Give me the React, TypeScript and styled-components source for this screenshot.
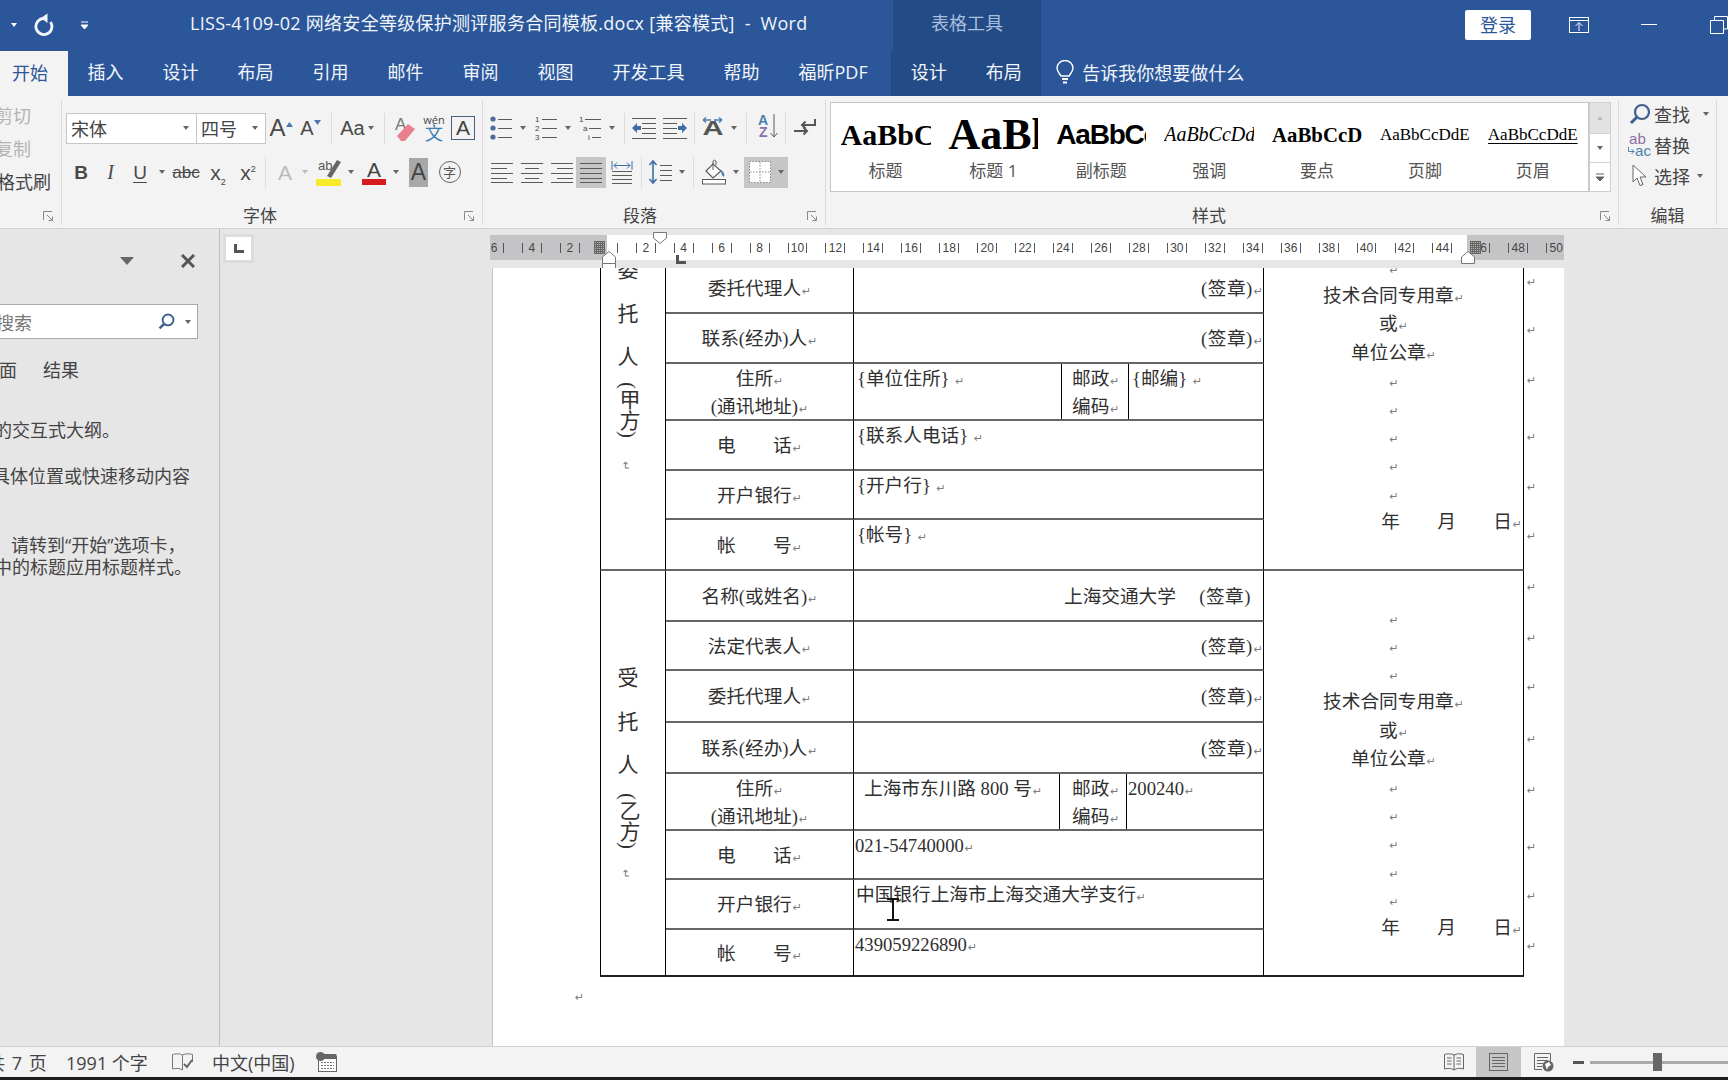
import React from "react";
import styled, { createGlobalStyle } from "styled-components";

const UI = `"Open Sans", "Noto Sans CJK SC", sans-serif`;
const DOC = `"Liberation Serif", "Noto Sans CJK SC", serif`;

const GlobalStyle = createGlobalStyle`
  html, body { margin: 0; padding: 0; background: #000; }
  * { box-sizing: border-box; }
`;

const Window = styled.div`
  width: 1728px;
  height: 1080px;
  display: flex;
  flex-direction: column;
  overflow: hidden;
  font-family: ${UI};
  background: #f3f3f3;
  border-bottom: 3px solid #1c1c1c;
`;

/* ---------- title bar ---------- */
const TitleBar = styled.div`
  height: 50px;
  flex: none;
  display: flex;
  align-items: center;
  background: #2b579a;
  color: #fff;
`;
const Quick = styled.div`
  width: 190px;
  flex: none;
  display: flex;
  align-items: center;
  padding-left: 11px;
`;
const DocTitle = styled.div`
  width: 703px;
  flex: none;
  font-size: 18px;
  letter-spacing: 0.28px;
  line-height: 46px;
  height: 50px;
  white-space: pre;
  color: #f2f5fa;
`;
const ToolsLabel = styled.div`
  width: 148px;
  flex: none;
  height: 50px;
  line-height: 46px;
  text-align: center;
  font-size: 18px;
  color: #a9bfdf;
  background: #234b85;
`;
const Login = styled.div`
  width: 70px;
  height: 30px;
  margin-left: 424px;
  border-radius: 2px;
  background: #fff;
  color: #2b579a;
  font-size: 18px;
  line-height: 30px;
  text-align: center;
`;
const WinBtn = styled.div<{ $ml: number }>`
  flex: none;
  margin-left: ${(p) => p.$ml}px;
  display: flex;
`;

/* ---------- tabs ---------- */
const TabBar = styled.div`
  height: 46px;
  flex: none;
  display: flex;
  background: #2b579a;
  overflow: hidden;
`;
const TabList = styled.div`
  display: flex;
  margin-left: -8px;
`;
const Tab = styled.div<{ $active?: boolean; $pad?: number }>`
  padding: 0 ${(p) => p.$pad ?? 19.5}px;
  font-size: 18px;
  line-height: 44px;
  white-space: nowrap;
  color: ${(p) => (p.$active ? "#2b579a" : "#f2f5fa")};
  background: ${(p) => (p.$active ? "#f3f3f3" : "transparent")};
  margin-top: ${(p) => (p.$active ? "1px" : "0")};
`;
const ContextTabs = styled.div`
  display: flex;
  margin-left: 4px;
  background: #234b85;
`;
const TellMe = styled.div`
  display: flex;
  align-items: center;
  margin-left: 15px;
  gap: 8px;
  font-size: 18px;
  color: #f2f5fa;
  height: 44px;
`;

/* ---------- ribbon ---------- */
const Ribbon = styled.div`
  height: 133px;
  flex: none;
  padding-top: 4px;
  display: flex;
  background: #f3f3f3;
  border-bottom: 1px solid #d2d2d2;
  color: #444;
`;
const Group = styled.div<{ $w: number; $pl?: number }>`
  position: relative;
  width: ${(p) => p.$w}px;
  height: 125px;
  flex: none;
  display: flex;
  flex-direction: column;
  padding-left: ${(p) => p.$pl ?? 0}px;
  border-right: 1px solid #dadada;
`;
const GroupLabel = styled.div<{ $ml?: number }>`
  margin-top: auto;
  margin-left: ${(p) => p.$ml ?? 0}px;
  text-align: center;
  font-size: 17px;
  line-height: 18px;
  color: #444;
`;
const Launcher = styled.svg`
  position: absolute;
  right: 7px;
  bottom: 3px;
`;
const ClipLine = styled.div<{ $dim?: boolean }>`
  height: 33px;
  line-height: 33px;
  font-size: 18px;
  margin-left: ${(p) => (p.$dim ? "-5px" : "-3px")};
  white-space: nowrap;
  color: ${(p) => (p.$dim ? "#b4b4b4" : "#444")};
`;
const ClipList = styled.div`
  overflow: hidden;
  width: 61px;
`;
const ToolRow = styled.div<{ $mt: number }>`
  display: flex;
  align-items: center;
  height: 38px;
  margin-top: ${(p) => p.$mt}px;
`;
const Combo = styled.div<{ $w: number; $first?: boolean }>`
  width: ${(p) => p.$w}px;
  height: 31px;
  flex: none;
  display: flex;
  align-items: center;
  justify-content: space-between;
  padding: 0 7px 0 4px;
  background: #fff;
  border: 1px solid #c6c6c6;
  border-left-width: ${(p) => (p.$first ? "1px" : "0")};
  font-size: 18px;
  color: #444;
`;
const Tool = styled.div<{ $w: number; $active?: boolean }>`
  width: ${(p) => p.$w}px;
  height: 31px;
  flex: none;
  display: flex;
  align-items: center;
  justify-content: center;
  background: ${(p) => (p.$active ? "#c6c6c6" : "transparent")};
`;
const Sp = styled.div<{ $w: number }>`
  width: ${(p) => p.$w}px;
  flex: none;
`;
const VBar = styled.div`
  width: 1px;
  height: 31px;
  flex: none;
  background: #dcdcdc;
`;
const Tri = styled.span<{ $color?: string; $up?: boolean }>`
  display: inline-block;
  flex: none;
  width: 0;
  height: 0;
  border-left: 3.5px solid transparent;
  border-right: 3.5px solid transparent;
  border-top: 4px solid ${(p) => p.$color ?? "#666"};
  transform: ${(p) => (p.$up ? "rotate(180deg)" : "none")};
`;
const Glyph = styled.span<{
  $size: number;
  $color?: string;
  $bold?: boolean;
  $italic?: boolean;
  $serif?: boolean;
  $under?: boolean;
  $strike?: boolean;
}>`
  font-family: ${(p) => (p.$serif ? DOC : `"Liberation Sans", sans-serif`)};
  font-size: ${(p) => p.$size}px;
  line-height: 1;
  font-weight: ${(p) => (p.$bold ? 700 : 400)};
  font-style: ${(p) => (p.$italic ? "italic" : "normal")};
  color: ${(p) => p.$color ?? "#4a4a4a"};
  text-decoration: ${(p) => (p.$under ? "underline" : p.$strike ? "line-through" : "none")};
  text-underline-offset: 3px;
  white-space: nowrap;

  sub, sup {
    font-size: 9px;
    line-height: 0;
  }
`;
const ColorA = styled.span<{ $bar: string; $color: string }>`
  display: flex;
  flex-direction: column;
  align-items: center;
  width: 22px;
  font-family: "Liberation Sans", sans-serif;
  font-size: 21px;
  line-height: 19px;
  color: ${(p) => p.$color};

  &::after {
    content: "";
    width: 24px;
    height: 6px;
    background: ${(p) => p.$bar};
  }
`;
const BoxedA = styled.span`
  width: 24px;
  height: 24px;
  border: 1px solid #4a5f7d;
  text-align: center;
  font-family: "Liberation Sans", sans-serif;
  font-size: 21px;
  line-height: 22px;
  color: #444;
`;
const GrayA = styled.span`
  width: 19px;
  height: 29px;
  background: #a8a8a8;
  text-align: center;
  font-family: "Liberation Sans", sans-serif;
  font-size: 23px;
  line-height: 29px;
  color: #444;
`;
const CircleChar = styled.span`
  width: 22px;
  height: 22px;
  border-radius: 50%;
  border: 1px solid #666;
  text-align: center;
  font-size: 13px;
  line-height: 20px;
  color: #555;
`;
const Wen = styled.span`
  display: flex;
  flex-direction: column;
  align-items: center;
  font-size: 11px;
  line-height: 11px;
  color: #444;

  b {
    font-weight: 400;
    font-size: 18px;
    line-height: 17px;
    color: #3f7cb5;
  }
`;

/* ---------- style gallery ---------- */
const GalleryRow = styled.div`
  display: flex;
`;
const Gallery = styled.div`
  margin: 2px 0 0 4px;
  width: 759px;
  height: 90px;
  display: flex;
  flex: none;
  overflow: hidden;
  background: #fff;
  border: 1px solid #c6c6c6;
`;
const StyleCard = styled.div`
  width: 107.9px;
  flex: none;
  padding: 1px 0 0 9.5px;
`;
const Preview = styled.div<{
  $size: number;
  $bold?: boolean;
  $italic?: boolean;
  $sans?: boolean;
  $line?: boolean;
}>`
  width: 90px;
  height: 59px;
  overflow: hidden;
  white-space: nowrap;
  line-height: 61px;
  color: #000;
  font-family: ${(p) => (p.$sans ? `"Liberation Sans", sans-serif` : DOC)};
  font-size: ${(p) => p.$size}px;
  font-weight: ${(p) => (p.$bold ? 700 : 400)};
  font-style: ${(p) => (p.$italic ? "italic" : "normal")};
  letter-spacing: ${(p) => (p.$sans ? "-1.2px" : "0")};
  text-decoration: ${(p) => (p.$line ? "underline" : "none")};
  text-underline-offset: 3px;
`;
const StyleName = styled.div`
  width: 90px;
  text-align: center;
  font-size: 17px;
  line-height: 16px;
  color: #555;
`;
const GalleryScroll = styled.div`
  width: 22px;
  flex: none;
  margin-top: 2px;
  height: 90px;
  display: grid;
  grid-template-rows: 32px 29px 29px;
`;
const ScrollBtn = styled.div<{ $off?: boolean }>`
  display: flex;
  flex-direction: column;
  gap: 2px;
  align-items: center;
  justify-content: center;
  background: ${(p) => (p.$off ? "#e2e2e2" : "#fff")};
  border: 1px solid #d0d0d0;
  border-top-width: ${(p) => (p.$off ? "1px" : "0")};
`;
const EditList = styled.div`
  margin-top: -2px;
`;
const EditLine = styled.div`
  height: 31px;
  display: flex;
  align-items: center;
  padding-left: 8px;
  gap: 2px;
  font-size: 18px;
  color: #444;
`;
const EditIcon = styled.div`
  width: 25px;
  flex: none;
  display: flex;
  justify-content: center;
`;
const AbAc = styled.span<{ $blue?: boolean }>`
  display: flex;
  align-items: center;
  font-family: "Liberation Sans", sans-serif;
  font-size: 15px;
  line-height: 12px;
  padding-left: ${(p) => (p.$blue ? "0" : "1px")};
  color: ${(p) => (p.$blue ? "#4a7fb0" : "#8a6fa8")};
`;

/* ---------- main area ---------- */
const Main = styled.div`
  flex: 1;
  min-height: 0;
  display: flex;
  background: #e6e6e7;
`;
const NavPane = styled.div`
  width: 220px;
  flex: none;
  padding-top: 22px;
  overflow: hidden;
  border-right: 1px solid #bdbdbd;
  color: #444;
`;
const NavHead = styled.div`
  height: 20px;
  display: flex;
  align-items: center;
  padding-left: 120px;
  gap: 47px;
`;
const SearchBox = styled.div`
  width: 198px;
  height: 35px;
  margin-top: 33px;
  display: flex;
  align-items: center;
  background: #fff;
  border: 1px solid #a9a9a9;
  border-left: 0;
  font-size: 18px;
  color: #777;
`;
const SearchText = styled.span`
  flex: 1;
  margin-left: -4px;
`;
const NavTabs = styled.div`
  margin-top: 20px;
  height: 22px;
  display: flex;
  font-size: 18px;
  line-height: 22px;
  gap: 26px;
  margin-left: -1px;
`;
const NavLine = styled.div<{ $x: number; $mt?: number }>`
  margin-left: ${(p) => p.$x}px;
  margin-top: ${(p) => p.$mt ?? 0}px;
  height: 22px;
  line-height: 22px;
  font-size: 18px;
  white-space: nowrap;
`;
const DocArea = styled.div`
  flex: 1;
  min-width: 0;
  display: flex;
  flex-direction: column;
`;
const RulerRow = styled.div`
  height: 39px;
  flex: none;
  display: flex;
  padding: 5px 0 0 3px;
`;
const Corner = styled.div`
  width: 31px;
  height: 29px;
  flex: none;
  display: flex;
  align-items: center;
  justify-content: center;
  background: #fff;
  border: 3px solid #dcdcdc;
`;
const RulerBox = styled.div`
  position: relative;
  margin-left: 236px;
  width: 1074px;
  height: 25px;
  margin-top: 1px;
  flex: none;
`;
const RulerStrip = styled.div`
  height: 25px;
  overflow: hidden;
  display: flex;
  background: linear-gradient(90deg, #c4c4c6 117px, #fff 117px, #fff 977px, #c4c4c6 977px);
`;
const RulerCell = styled.div<{ $first?: boolean }>`
  width: 37.95px;
  flex: none;
  margin-left: ${(p) => (p.$first ? "-15px" : "0")};
  display: flex;
  align-items: center;
  justify-content: space-between;
  padding: 0 9px;
  font-family: "Liberation Sans", sans-serif;
  font-size: 12px;
  color: #444;
`;
const RulerTick = styled.i<{ $hide?: boolean }>`
  width: 1px;
  height: 10px;
  background: ${(p) => (p.$hide ? "transparent" : "#555")};
`;
const Marker = styled.svg<{ $x: number; $y: number }>`
  position: absolute;
  left: ${(p) => p.$x}px;
  top: ${(p) => p.$y}px;
`;
const ColMarker = styled.div<{ $x: number; $w: number }>`
  position: absolute;
  left: ${(p) => p.$x}px;
  top: 6px;
  width: ${(p) => p.$w}px;
  height: 13px;
  background:
    repeating-linear-gradient(0deg, #666 0 1px, transparent 1px 2px),
    repeating-linear-gradient(90deg, #666 0 1px, #b4b4b4 1px 2px);
`;
const Page = styled.div`
  position: relative;
  margin-left: 272px;
  width: 1072px;
  flex: 1;
  min-height: 0;
  overflow: hidden;
  padding-left: 81px;
  background: #fff;
  border-left: 1px solid #c4c4c4;
  font-family: ${DOC};
  font-size: 18.67px;
  color: #303030;
`;
const Party = styled.div<{ $mt?: number; $rows: string }>`
  margin: ${(p) => p.$mt ?? 0}px 0 0 26px;
  display: grid;
  grid-template-columns: 66px 188px 410px 260px 40px;
  grid-template-rows: ${(p) => p.$rows};
  width: 964px;
`;
const rule = `2px solid #666`;
const closing = `2px solid #222`;
const PartyCell = styled.div<{ $rows: number; $pad: number; $closing?: boolean }>`
  grid-column: 1;
  grid-row: 1 / span ${(p) => p.$rows};
  display: flex;
  flex-direction: column;
  align-items: center;
  padding: ${(p) => p.$pad}px 10px 0 0;
  border-left: 1px solid #000;
  border-right: 1px solid #000;
  border-bottom: ${(p) => (p.$closing ? closing : rule)};
  font-size: 21px;
`;
const PartyChar = styled.span`
  height: 43.5px;
  line-height: 26px;
  flex: none;
`;
const PartyRole = styled.span<{ $mt: number }>`
  writing-mode: vertical-rl;
  line-height: 28px;
  flex: none;
  margin-top: ${(p) => p.$mt}px;
  height: 68px;
  text-align: center;
`;
const RoleMark = styled.span<{ $mt: number }>`
  margin-top: ${(p) => p.$mt}px;
  line-height: 1;
  transform: rotate(90deg);
`;
const SealCell = styled.div<{ $rows: number; $pad?: number; $closing?: boolean }>`
  grid-column: 4;
  grid-row: 1 / span ${(p) => p.$rows};
  display: flex;
  flex-direction: column;
  justify-content: ${(p) => (p.$pad !== undefined ? "flex-start" : "center")};
  border-right: 1px solid #000;
  border-bottom: ${(p) => (p.$closing ? closing : rule)};

  & > :first-child {
    margin-top: ${(p) => p.$pad ?? 0}px;
  }
`;
const SealLine = styled.div<{ $right?: boolean }>`
  height: 28.2px;
  line-height: 28.2px;
  text-align: ${(p) => (p.$right ? "right" : "center")};
  white-space: pre;
  padding-right: ${(p) => (p.$right ? "1px" : "0")};
`;
const LabelCell = styled.div<{ $top?: number; $last?: boolean }>`
  padding-top: ${(p) => (p.$top ?? 0) + 2}px;
  display: flex;
  flex-direction: column;
  align-items: center;
  justify-content: center;
  line-height: 28px;
  white-space: pre;
  border-right: 1px solid #000;
  border-bottom: ${(p) => (p.$last ? closing : rule)};
`;
const ValueCell = styled.div<{ $top?: number; $sign?: boolean; $indent?: number; $last?: boolean }>`
  display: flex;
  padding-top: ${(p) => (p.$top ?? 0) + (p.$sign ? 2 : 1)}px;
  padding-left: ${(p) => p.$indent ?? 3}px;
  line-height: 28px;
  white-space: pre;
  align-items: ${(p) => (p.$sign ? "center" : "flex-start")};
  justify-content: ${(p) => (p.$sign ? "flex-end" : "flex-start")};
  border-right: 1px solid #000;
  border-bottom: ${(p) => (p.$last ? closing : rule)};
`;
const SignText = styled.span`
  letter-spacing: 0.5px;
`;
const SignedName = styled.span`
  margin-right: 12px;
`;
const AddrCell = styled.div`
  display: flex;
  line-height: 28px;
  white-space: pre;
  border-right: 1px solid #000;
  border-bottom: ${rule};
`;
const AddrPart = styled.div<{ $w?: number; $indent: number }>`
  width: ${(p) => (p.$w ? `${p.$w}px` : "auto")};
  flex: ${(p) => (p.$w ? "none" : "1")};
  padding: 1px 0 0 ${(p) => p.$indent}px;
  border-right: ${(p) => (p.$w ? "1px solid #000" : "0")};
`;
const EndCell = styled.div<{ $top?: number }>`
  padding: ${(p) => (p.$top ? p.$top + 6 : 4)}px 0 0 2px;
  line-height: 19px;
`;
const Mark = styled.span`
  font-family: "DejaVu Sans", sans-serif;
  font-size: 11px;
  line-height: 1;
  color: #7c7c7c;
  margin-left: 1px;
`;
const LooseMark = styled.div`
  margin-top: 11px;
  line-height: 14px;
`;
const Beam = styled.svg`
  position: absolute;
  left: 393px;
  top: 630px;
`;

/* ---------- status bar ---------- */
const StatusBar = styled.div`
  height: 31px;
  flex: none;
  display: flex;
  align-items: center;
  background: #f3f3f3;
  border-top: 1px solid #d0d0d0;
  font-size: 18px;
  color: #444;
  overflow: hidden;
`;
const StatusText = styled.span<{ $ml?: number; $w?: number; $spread?: number }>`
  margin-left: ${(p) => p.$ml ?? 0}px;
  width: ${(p) => (p.$w ? `${p.$w}px` : "auto")};
  flex: none;
  white-space: nowrap;
  word-spacing: ${(p) => p.$spread ?? 0}px;
`;
const StatusIcon = styled.span<{ $ml: number; $w?: number; $active?: boolean }>`
  margin-left: ${(p) => p.$ml}px;
  width: ${(p) => (p.$w ? `${p.$w}px` : "auto")};
  height: 31px;
  flex: none;
  display: flex;
  align-items: center;
  justify-content: center;
  background: ${(p) => (p.$active ? "#c6c6c6" : "transparent")};
`;
const StatusRight = styled.div`
  margin-left: auto;
  width: 284px;
  flex: none;
  display: flex;
  align-items: center;
`;
const Slider = styled.div`
  margin-left: 6px;
  flex: 1;
  height: 3px;
  position: relative;
  background: #aaa;
`;
const SliderThumb = styled.div`
  position: absolute;
  left: 63px;
  top: -8px;
  width: 9px;
  height: 18px;
  background: #666;
`;

/* ---------- drawn icons ---------- */
const ink = "#5a5a5a";

const Lines = ({ rows, w = 22, h = 22, color = ink }: { rows: [number, number, number][]; w?: number; h?: number; color?: string }) => (
  <svg width={w} height={h}>
    {rows.map(([x1, x2, y], i) => (
      <line key={i} x1={x1} x2={x2} y1={y + 0.5} y2={y + 0.5} stroke={color} />
    ))}
  </svg>
);
const alignRows = (a: [number, number], b: [number, number]): [number, number, number][] => [
  [a[0], a[1], 2],
  [b[0], b[1], 7],
  [a[0], a[1], 12],
  [b[0], b[1], 17],
  [a[0], a[1], 21],
];

const Bullets = () => (
  <svg width="22" height="26">
    {[4, 13, 22].map((y) => (
      <g key={y}>
        <circle cx="3" cy={y} r="2.6" fill="#4b6d9c" />
        <line x1="8" x2="22" y1={y + 0.5} y2={y + 0.5} stroke={ink} />
      </g>
    ))}
  </svg>
);
const Numbered = () => (
  <svg width="22" height="26" fontSize="8" fontFamily="Liberation Sans" fill="#444">
    {[1, 2, 3].map((n, i) => (
      <g key={n}>
        <text x="0" y={7 + i * 9}>{n}</text>
        <line x1="7" x2="22" y1={4.5 + i * 9} y2={4.5 + i * 9} stroke={ink} />
      </g>
    ))}
  </svg>
);
const Multilevel = () => (
  <svg width="22" height="26" fontSize="8" fontFamily="Liberation Sans" fill="#444">
    <text x="0" y="7">1</text>
    <line x1="6" x2="22" y1="4.5" y2="4.5" stroke={ink} />
    <text x="4" y="16">a</text>
    <line x1="10" x2="22" y1="13.5" y2="13.5" stroke={ink} />
    <text x="9" y="25">i</text>
    <line x1="13" x2="22" y1="22.5" y2="22.5" stroke={ink} />
  </svg>
);
const Indent = ({ flip }: { flip?: boolean }) => (
  <svg width="24" height="24" style={flip ? { transform: "scaleX(-1)" } : undefined}>
    {[2, 22].map((y) => (
      <line key={y} x1="0" x2="24" y1={y + 0.5} y2={y + 0.5} stroke={ink} />
    ))}
    {[7, 12, 17].map((y) => (
      <line key={y} x1="10" x2="24" y1={y + 0.5} y2={y + 0.5} stroke={ink} />
    ))}
    <path d="M0 12 L5 7 V10 H9 V14 H5 V17 Z" fill="#3d6ea8" />
  </svg>
);
const SortA = () => (
  <svg width="24" height="24">
    <text x="1.5" y="19" fontSize="21" textLength="21" lengthAdjust="spacingAndGlyphs" fontFamily="Liberation Sans" fontWeight="700" fill="#555">A</text>
    <path d="M10 4 H2 M2 4 L5 1.5 M2 4 L5 6.5 M13 4 H21 M21 4 L18 1.5 M21 4 L18 6.5" stroke="#4a7fb0" strokeWidth="1.5" fill="none" />
  </svg>
);
const SortAZ = () => (
  <svg width="20" height="28" fontFamily="Liberation Sans" fontSize="14" fontWeight="700">
    <text x="0" y="11" fill="#4a7fb0">A</text>
    <text x="1" y="23" fill="#8a6fa8">Z</text>
    <path d="M16 0 V23 M12.5 19 L16 23 L19.5 19" stroke={ink} fill="none" />
  </svg>
);
const ParaDir = () => (
  <svg width="24" height="22">
    <path d="M23 2 V8 H10 M13.5 4.5 L10 8 L13.5 11.5" stroke="#555" strokeWidth="2" fill="none" />
    <path d="M2 14 H15 M11.5 10.5 L15 14 L11.5 17.5" stroke="#555" strokeWidth="2" fill="none" />
  </svg>
);
const Distribute = () => (
  <svg width="22" height="26">
    <path d="M1 2 V11 M21 2 V11 M3 6.5 H19 M6 3.5 L3 6.5 L6 9.5 M16 3.5 L19 6.5 L16 9.5" stroke="#3d6ea8" fill="none" />
    {[13, 17, 21, 25].map((y) => (
      <line key={y} x1="1" x2="21" y1={y - 0.5} y2={y - 0.5} stroke={ink} />
    ))}
  </svg>
);
const LineSpacing = () => (
  <svg width="24" height="26">
    <path d="M5 2 V24 M1.5 6 L5 2 L8.5 6 M1.5 20 L5 24 L8.5 20" stroke="#3d6ea8" strokeWidth="1.6" fill="none" />
    {[6, 11, 16, 21].map((y) => (
      <line key={y} x1="12" x2="24" y1={y + 0.5} y2={y + 0.5} stroke={ink} />
    ))}
  </svg>
);
const Shading = () => (
  <svg width="26" height="26">
    <path d="M5 12 L12 5 L20 12 L12 19 Z" stroke={ink} fill="#fff" strokeWidth="1.2" />
    <path d="M12 11 V3 C12 0.5 15 0.5 15 3 V6" stroke={ink} fill="none" />
    <path d="M20 11 C23 13 24 15 23 18 C21 17 20 14 20 11 Z" fill="#4a7fb0" />
    <rect x="1.5" y="20.5" width="23" height="4.5" stroke={ink} fill="#fff" />
  </svg>
);
const BorderGrid = () => (
  <svg width="22" height="24">
    <rect x="0.5" y="1.5" width="21" height="21" fill="#fff" stroke="#888" strokeDasharray="1.5 1.5" />
    <path d="M11 2 V22 M1 12 H21" stroke="#888" strokeDasharray="1.5 1.5" />
  </svg>
);
const Highlighter = () => (
  <svg width="26" height="28" fontFamily="Liberation Sans" fontSize="13">
    <text x="2" y="12" fill="#555">ab</text>
    <path d="M11 18 L21 2 L25 4 L15 20 Z" fill="#666" />
    <rect x="0" y="21" width="25" height="7" fill="#f7ea2b" />
  </svg>
);
const Eraser = () => (
  <svg width="22" height="28" fontFamily="Liberation Sans" fontSize="17">
    <text x="1" y="16" fill="#777">A</text>
    <path d="M3 22 L14 10 L21 15 L11 27 L7 27 Z" fill="#e9808d" />
  </svg>
);
const Launch = () => (
  <Launcher width="11" height="11">
    <path d="M0.5 9 V0.5 H9 M4 4 L9.5 9.5 M9.5 5.5 V9.5 H5.5" stroke="#888" fill="none" />
  </Launcher>
);
const SearchGlass = ({ size = 22, sw = 2.2 }: { size?: number; sw?: number }) => (
  <svg width={size} height={size} viewBox="0 0 22 22">
    <circle cx="13" cy="9" r="7" stroke="#3d6091" strokeWidth={sw} fill="none" />
    <line x1="8" y1="14" x2="2" y2="20" stroke="#3d6091" strokeWidth={sw + 0.8} />
  </svg>
);
const Arrow = () => (
  <svg width="15" height="23">
    <path d="M1 1 V18 L5 14 L8 21.5 L11 20.5 L8 13 H14 Z" fill="#fff" stroke="#666" />
  </svg>
);
const Redo = () => (
  <svg width="22" height="24" style={{ marginLeft: 15 }}>
    <path d="M12 5.5 A 8 8 0 1 0 18.5 9" stroke="#f2f5fa" strokeWidth="2.8" fill="none" />
    <path d="M9 5 L15.5 0.5 V10 Z" fill="#f2f5fa" />
  </svg>
);

const Pm = () => <Mark>↵</Mark>;

type Addr = [number, React.ReactNode, number, number, React.ReactNode, number];
type Row = { label: React.ReactNode; value?: React.ReactNode; sign?: boolean; indent?: number; addr?: Addr };

const sign = (
  <span>
    <SignText>(签章)</SignText>
    <Pm />
  </span>
);

const addressLabel = (
  <>
    <span>住所<Pm /></span>
    <span>(通讯地址)<Pm /></span>
  </>
);

const firstRows: Row[] = [
  { label: <span>委托代理人<Pm /></span>, value: sign, sign: true },
  { label: <span>联系(经办)人<Pm /></span>, value: sign, sign: true },
  {
    label: addressLabel,
    addr: [208, <>{"{单位住所}"} <Pm /></>, 3, 10, <>{"{邮编}"} <Pm /></>, 3],
  },
  { label: <span>电{"\u3000\u3000"}话<Pm /></span>, value: <span>{"{联系人电话}"} <Pm /></span> },
  { label: <span>开户银行<Pm /></span>, value: <span>{"{开户行}"} <Pm /></span> },
  { label: <span>帐{"\u3000\u3000"}号<Pm /></span>, value: <span>{"{帐号}"} <Pm /></span> },
];

const secondRows: Row[] = [
  {
    label: <span>名称(或姓名)<Pm /></span>,
    value: <SignedName>上海交通大学{"\u2003 "}<SignText>(签章)</SignText></SignedName>,
    sign: true,
  },
  { label: <span>法定代表人<Pm /></span>, value: sign, sign: true },
  { label: <span>委托代理人<Pm /></span>, value: sign, sign: true },
  { label: <span>联系(经办)人<Pm /></span>, value: sign, sign: true },
  {
    label: addressLabel,
    addr: [206, <>上海市东川路 800 号<Pm /></>, 10, 12, <>200240<Pm /></>, 1],
  },
  { label: <span>电{"\u3000\u3000"}话<Pm /></span>, value: <span>021-54740000<Pm /></span>, indent: 1 },
  { label: <span>开户银行<Pm /></span>, value: <span>中国银行上海市上海交通大学支行<Pm /></span>, indent: 2 },
  { label: <span>帐{"\u3000\u3000"}号<Pm /></span>, value: <span>439059226890<Pm /></span>, indent: 1 },
];

const sealLines = (before: number, after: number) => (
  <>
    {Array.from({ length: before }).map((_, i) => (
      <SealLine key={`b${i}`}><Pm /></SealLine>
    ))}
    <SealLine>技术合同专用章<Pm /></SealLine>
    <SealLine>或<Pm /></SealLine>
    <SealLine>单位公章<Pm /></SealLine>
    {Array.from({ length: after }).map((_, i) => (
      <SealLine key={`a${i}`}><Pm /></SealLine>
    ))}
    <SealLine $right>{"年\u3000\u3000月\u3000\u3000日"}<Pm /></SealLine>
  </>
);

function PartyTable({
  rows,
  heights,
  marginTop,
  chars,
  role,
  roleGap,
  markGap,
  firstPad,
  partyPad,
  sealPad,
  seals,
  isClosing,
}: {
  rows: Row[];
  heights: number[];
  marginTop?: number;
  chars: string[];
  role: string;
  roleGap: number;
  markGap: number;
  firstPad?: number;
  partyPad: number;
  sealPad?: number;
  seals: [number, number];
  isClosing?: boolean;
}) {
  return (
    <Party $mt={marginTop} $rows={heights.map((h) => `${h}px`).join(" ")}>
      <PartyCell $rows={rows.length} $pad={partyPad} $closing={isClosing}>
        {chars.map((c) => (
          <PartyChar key={c}>{c}</PartyChar>
        ))}
        <PartyRole $mt={roleGap}>{role}</PartyRole>
        <RoleMark $mt={markGap}><Pm /></RoleMark>
      </PartyCell>
      <SealCell $rows={rows.length} $pad={sealPad} $closing={isClosing}>
        {sealLines(seals[0], seals[1])}
      </SealCell>
      {rows.map((r, i) => {
        const top = i === 0 ? firstPad : undefined;
        const last = i === rows.length - 1 && isClosing;
        return (
          <React.Fragment key={i}>
            <LabelCell $top={top} $last={last}>{r.label}</LabelCell>
            {r.addr ? (
              <AddrCell>
                <AddrPart $w={r.addr[0]} $indent={r.addr[2]}>{r.addr[1]}</AddrPart>
                <AddrPart $w={67} $indent={r.addr[3]}>
                  邮政<Pm />
                  <br />
                  编码<Pm />
                </AddrPart>
                <AddrPart $indent={r.addr[5]}>{r.addr[4]}</AddrPart>
              </AddrCell>
            ) : (
              <ValueCell $top={top} $sign={r.sign} $indent={r.indent} $last={last}>
                {r.value}
              </ValueCell>
            )}
            <EndCell $top={top}><Pm /></EndCell>
          </React.Fragment>
        );
      })}
    </Party>
  );
}

const rulerValues = Array.from({ length: 29 }, (_, i) => -6 + i * 2);

export default function App() {
  return (
    <Window>
      <GlobalStyle />
      <TitleBar>
        <Quick>
          <Tri $color="#fff" />
          <Redo />
          <svg width="9" height="9" style={{ marginLeft: 26 }}>
            <path d="M1 1 H8 M1 4 H8 L4.5 8 Z" stroke="#fff" fill="#fff" strokeWidth="1" />
          </svg>
        </Quick>
        <DocTitle>LISS-4109-02 网络安全等级保护测评服务合同模板.docx [兼容模式]  -  Word</DocTitle>
        <ToolsLabel>表格工具</ToolsLabel>
        <Login>登录</Login>
        <WinBtn $ml={38}>
          <svg width="20" height="16">
            <rect x="0.5" y="0.5" width="19" height="15" stroke="#fff" fill="none" />
            <path d="M1 3.5 H19 M10 14 V6 M6.5 9 L10 5.5 L13.5 9" stroke="#fff" fill="none" />
          </svg>
        </WinBtn>
        <WinBtn $ml={52}>
          <svg width="16" height="2"><rect width="16" height="1" fill="#fff" /></svg>
        </WinBtn>
        <WinBtn $ml={53}>
          <svg width="18" height="18">
            <path d="M4.5 4 V0.5 H17.5 V13 H13.5 M0.5 4.5 H13.5 V17.5 H0.5 Z" stroke="#fff" fill="none" />
          </svg>
        </WinBtn>
      </TitleBar>

      <TabBar>
        <TabList>
          <Tab $active $pad={20}>开始</Tab>
          <Tab>插入</Tab>
          <Tab>设计</Tab>
          <Tab>布局</Tab>
          <Tab>引用</Tab>
          <Tab>邮件</Tab>
          <Tab>审阅</Tab>
          <Tab>视图</Tab>
          <Tab>开发工具</Tab>
          <Tab>帮助</Tab>
          <Tab>福昕PDF</Tab>
        </TabList>
        <ContextTabs>
          <Tab $pad={19.5}>设计</Tab>
          <Tab $pad={19.5}>布局</Tab>
        </ContextTabs>
        <TellMe>
          <svg width="18" height="24">
            <path d="M5 16 C3 13 1 11 1 8 A8 7.5 0 0 1 17 8 C17 11 15 13 13 16 Z" stroke="#fff" strokeWidth="1.4" fill="none" />
            <path d="M6 19 H12 M7 22.5 H11" stroke="#fff" strokeWidth="2" />
          </svg>
          告诉我你想要做什么
        </TellMe>
      </TabBar>

      <Ribbon>
        <Group $w={62}>
          <ClipList>
            <ClipLine $dim>剪切</ClipLine>
            <ClipLine $dim>复制</ClipLine>
            <ClipLine>格式刷</ClipLine>
          </ClipList>
          <Launch />
        </Group>

        <Group $w={421} $pl={4}>
          <ToolRow $mt={9}>
            <Combo $w={131} $first>宋体<Tri /></Combo>
            <Combo $w={69}>四号<Tri /></Combo>
            <Tool $w={30}>
              <Glyph $size={24}>A</Glyph>
              <svg width="7" height="14"><path d="M0 6 L3.5 1 L7 6 Z" fill="#4a78ae" /></svg>
            </Tool>
            <Tool $w={29}>
              <Glyph $size={20}>A</Glyph>
              <svg width="7" height="18"><path d="M0 1 L3.5 6 L7 1 Z" fill="#4a78ae" /></svg>
            </Tool>
            <Sp $w={6} /><VBar /><Sp $w={6} />
            <Tool $w={38}>
              <Glyph $size={20}>Aa</Glyph>
              <Sp $w={3} />
              <Tri />
            </Tool>
            <Sp $w={8} /><VBar /><Sp $w={5} />
            <Tool $w={30}><Eraser /></Tool>
            <Tool $w={28}>
              <Wen>wén<b>文</b></Wen>
            </Tool>
            <Tool $w={30}><BoxedA>A</BoxedA></Tool>
          </ToolRow>
          <ToolRow $mt={6}>
            <Tool $w={30}><Glyph $size={19} $bold>B</Glyph></Tool>
            <Tool $w={29}><Glyph $size={20} $italic $serif>I</Glyph></Tool>
            <Tool $w={30}><Glyph $size={19} $under>U</Glyph></Tool>
            <Tool $w={14}><Tri /></Tool>
            <Tool $w={34}><Glyph $size={17} $strike>abc</Glyph></Tool>
            <Tool $w={30}><Glyph $size={21}>x<sub>2</sub></Glyph></Tool>
            <Tool $w={30}><Glyph $size={21}>x<sup>2</sup></Glyph></Tool>
            <Sp $w={2} /><VBar /><Sp $w={4} />
            <Tool $w={30}><Glyph $size={21} $color="#bbb">A</Glyph></Tool>
            <Tool $w={10}><Tri $color="#bbb" /></Tool>
            <Sp $w={3} />
            <Tool $w={32}><Highlighter /></Tool>
            <Tool $w={12}><Tri /></Tool>
            <Tool $w={34}><ColorA $color="#444" $bar="#d71920">A</ColorA></Tool>
            <Tool $w={10}><Tri /></Tool>
            <Sp $w={3} />
            <Tool $w={29}><GrayA>A</GrayA></Tool>
            <Sp $w={1} />
            <Tool $w={31}><CircleChar>字</CircleChar></Tool>
          </ToolRow>
          <GroupLabel $ml={-28}>字体</GroupLabel>
          <Launch />
        </Group>

        <Group $w={343} $pl={5}>
          <ToolRow $mt={9}>
            <Tool $w={26}><Bullets /></Tool>
            <Tool $w={18}><Tri /></Tool>
            <Tool $w={28}><Numbered /></Tool>
            <Tool $w={16}><Tri /></Tool>
            <Tool $w={28}><Multilevel /></Tool>
            <Tool $w={16}><Tri /></Tool>
            <Sp $w={4} /><VBar /><Sp $w={2} />
            <Tool $w={34}><Indent /></Tool>
            <Tool $w={27}><Indent flip /></Tool>
            <Sp $w={6} /><VBar /><Sp $w={2} />
            <Tool $w={31}><SortA /></Tool>
            <Tool $w={12}><Tri /></Tool>
            <Sp $w={6} /><VBar /><Sp $w={4} />
            <Tool $w={34}><SortAZ /></Tool>
            <VBar />
            <Tool $w={36}><ParaDir /></Tool>
          </ToolRow>
          <ToolRow $mt={6}>
            <Tool $w={27}><Lines rows={alignRows([0, 22], [0, 16])} /></Tool>
            <Tool $w={33}><Lines rows={alignRows([0, 22], [4, 18])} /></Tool>
            <Tool $w={28}><Lines rows={alignRows([0, 22], [6, 22])} /></Tool>
            <Tool $w={30} $active><Lines rows={alignRows([0, 22], [0, 22])} /></Tool>
            <Tool $w={32}><Distribute /></Tool>
            <Sp $w={3} /><VBar />
            <Tool $w={35}><LineSpacing /></Tool>
            <Tool $w={10}><Tri /></Tool>
            <Sp $w={6} /><VBar /><Sp $w={3} />
            <Tool $w={33}><Shading /></Tool>
            <Tool $w={12}><Tri /></Tool>
            <Sp $w={2} />
            <Tool $w={44} $active>
              <BorderGrid />
              <Sp $w={7} />
              <Tri />
            </Tool>
          </ToolRow>
          <GroupLabel $ml={-33}>段落</GroupLabel>
          <Launch />
        </Group>

        <Group $w={793}>
          <GalleryRow>
            <Gallery>
              <StyleCard>
                <Preview $size={30} $bold>AaBbC</Preview>
                <StyleName>标题</StyleName>
              </StyleCard>
              <StyleCard>
                <Preview $size={44} $bold>AaBl</Preview>
                <StyleName>标题 1</StyleName>
              </StyleCard>
              <StyleCard>
                <Preview $size={28} $bold $sans>AaBbCc</Preview>
                <StyleName>副标题</StyleName>
              </StyleCard>
              <StyleCard>
                <Preview $size={20} $italic>AaBbCcDd</Preview>
                <StyleName>强调</StyleName>
              </StyleCard>
              <StyleCard>
                <Preview $size={20.8} $bold>AaBbCcD</Preview>
                <StyleName>要点</StyleName>
              </StyleCard>
              <StyleCard>
                <Preview $size={17}>AaBbCcDdE</Preview>
                <StyleName>页脚</StyleName>
              </StyleCard>
              <StyleCard>
                <Preview $size={17} $line>AaBbCcDdE</Preview>
                <StyleName>页眉</StyleName>
              </StyleCard>
            </Gallery>
            <GalleryScroll>
              <ScrollBtn $off><Tri $up $color="#bbb" /></ScrollBtn>
              <ScrollBtn><Tri /></ScrollBtn>
              <ScrollBtn>
                <svg width="8" height="9"><path d="M0 1 H8 M0 4 H8 L4 8 Z" stroke="#666" fill="#666" strokeWidth="1" /></svg>
              </ScrollBtn>
            </GalleryScroll>
          </GalleryRow>
          <GroupLabel $ml={-26}>样式</GroupLabel>
          <Launch />
        </Group>

        <Group $w={98}>
          <EditList>
            <EditLine>
              <EditIcon><SearchGlass /></EditIcon>
              查找
              <Sp $w={9} />
              <Tri />
            </EditLine>
            <EditLine>
              <EditIcon>
                <div>
                  <AbAc>ab</AbAc>
                  <AbAc $blue>
                    <svg width="7" height="8"><path d="M0.5 0 V4.5 H6 M3.5 2 L6 4.5 L3.5 7" stroke="#4a7fb0" fill="none" /></svg>
                    ac
                  </AbAc>
                </div>
              </EditIcon>
              替换
            </EditLine>
            <EditLine>
              <EditIcon><Arrow /></EditIcon>
              选择
              <Sp $w={3} />
              <Tri />
            </EditLine>
          </EditList>
          <GroupLabel>编辑</GroupLabel>
        </Group>
      </Ribbon>

      <Main>
        <NavPane>
          <NavHead>
            <svg width="14" height="8"><path d="M0 0 H14 L7 8 Z" fill="#666" /></svg>
            <svg width="14" height="14"><path d="M1 1 L13 13 M13 1 L1 13" stroke="#555" strokeWidth="3" /></svg>
          </NavHead>
          <SearchBox>
            <SearchText>搜索</SearchText>
            <SearchGlass size={17} sw={2.4} />
            <Sp $w={10} />
            <Tri />
            <Sp $w={6} />
          </SearchBox>
          <NavTabs>
            <span>面</span>
            <span>结果</span>
          </NavTabs>
          <NavLine $x={-6} $mt={38}>的交互式大纲。</NavLine>
          <NavLine $x={-8} $mt={24}>具体位置或快速移动内容</NavLine>
          <NavLine $x={11} $mt={47}>请转到“开始”选项卡，</NavLine>
          <NavLine $x={-6}>中的标题应用标题样式。</NavLine>
        </NavPane>

        <DocArea>
          <RulerRow>
            <Corner>
              <svg width="10" height="9"><path d="M0 0 H3 V6 H10 V9 H0 Z" fill="#555" /></svg>
            </Corner>
            <RulerBox>
              <RulerStrip>
                {rulerValues.map((v, i) => (
                  <RulerCell key={v} $first={i === 0}>
                    <RulerTick $hide={v === 0} />
                    <span>{v === 0 ? "" : Math.abs(v)}</span>
                    <RulerTick />
                  </RulerCell>
                ))}
              </RulerStrip>
              <ColMarker $x={104} $w={11} />
              <ColMarker $x={980} $w={11} />
              <Marker $x={163} $y={-3} width="14" height="12">
                <path d="M0.5 0.5 H13.5 V6 L7 11.5 L0.5 6 Z" fill="#fff" stroke="#777" />
              </Marker>
              <Marker $x={112} $y={16} width="14" height="19">
                <path d="M0.5 12.5 V6 L7 0.5 L13.5 6 V12.5 Z M0.5 12.5 H13.5 V18.5 H0.5 Z" fill="#fff" stroke="#777" />
              </Marker>
              <Marker $x={971} $y={16} width="14" height="13">
                <path d="M0.5 12.5 V6 L7 0.5 L13.5 6 V12.5 Z" fill="#fff" stroke="#777" />
              </Marker>
              <Marker $x={186} $y={20} width="10" height="9">
                <path d="M0 0 H3 V6 H10 V9 H0 Z" fill="#555" />
              </Marker>
            </RulerBox>
          </RulerRow>

          <Page>
            <PartyTable
              rows={firstRows}
              heights={[57, 50, 57, 50, 49, 51]}
              marginTop={-11}
              chars={["委", "托", "人"]}
              role="(甲方)"
              roleGap={-12}
              markGap={11}
              firstPad={7}
              partyPad={0}
              sealPad={-3}
              seals={[1, 5]}
            />
            <PartyTable
              rows={secondRows}
              heights={[51, 49, 52, 51, 57, 49, 50, 47]}
              chars={["受", "托", "人"]}
              role="(乙方)"
              roleGap={-9}
              markGap={8}
              partyPad={94}
              seals={[3, 5]}
              isClosing
            />
            <LooseMark><Pm /></LooseMark>
            <Beam width="14" height="23">
              <path d="M1 1 H13 M1 22 H13 M7 1 V22" stroke="#111" strokeWidth="2" />
            </Beam>
          </Page>
        </DocArea>
      </Main>

      <StatusBar>
        <StatusText $ml={-13} $w={79} $spread={2}>共 7 页</StatusText>
        <StatusText $w={106}>1991 个字</StatusText>
        <StatusIcon $ml={0}>
          <svg width="21" height="18">
            <path d="M10.5 2 C8 0.5 4 0.5 0.5 1.5 V16 C4 15 8 15 10.5 17 M10.5 2 V17 M10.5 2 C13 0.5 17 0.5 20.5 1.5 V9" stroke="#777" fill="none" />
            <path d="M12 11 L15 14 L20 7" stroke="#666" strokeWidth="2" fill="none" />
          </svg>
        </StatusIcon>
        <StatusText $ml={19} $w={104}>中文(中国)</StatusText>
        <StatusIcon $ml={0}>
          <svg width="21" height="20">
            <rect x="2.5" y="4.5" width="18" height="15" fill="#fff" stroke="#666" />
            <rect x="2.5" y="2" width="18" height="5" fill="#666" />
            <circle cx="4.5" cy="4.5" r="4.5" fill="#666" />
            <path d="M5 10.5 H18 M5 13.5 H18 M5 16.5 H18" stroke="#777" strokeDasharray="2 1" />
          </svg>
        </StatusIcon>
        <StatusRight>
          <StatusIcon $ml={0}>
            <svg width="20" height="18">
              <path d="M10 2 C7 0.5 4 0.5 0.5 1.5 V16 C4 15 7 15 10 17 C13 15 16 15 19.5 16 V1.5 C16 0.5 13 0.5 10 2 Z M10 2 V17 M3 5 H7.5 M3 8 H7.5 M3 11 H7.5 M12.5 5 H17 M12.5 8 H17 M12.5 11 H17" stroke="#666" fill="none" />
            </svg>
          </StatusIcon>
          <StatusIcon $ml={12} $w={45} $active>
            <svg width="19" height="18">
              <rect x="0.5" y="0.5" width="18" height="17" stroke="#666" fill="none" />
              <path d="M3 4.5 H16 M3 7.5 H16 M3 10.5 H16 M3 13.5 H16" stroke="#666" />
            </svg>
          </StatusIcon>
          <StatusIcon $ml={13}>
            <svg width="20" height="19">
              <path d="M0.5 0.5 H16.5 V8 M0.5 0.5 V16.5 H8 M3 4.5 H14 M3 7.5 H14 M3 10.5 H9 M3 13.5 H8" stroke="#666" fill="none" />
              <circle cx="14" cy="13" r="5.5" fill="#666" />
              <path d="M11 11 L15 9 L17 12 L14 14 L13 17 Z" fill="#fff" />
            </svg>
          </StatusIcon>
          <StatusIcon $ml={19}>
            <svg width="11" height="3"><rect width="11" height="3" fill="#555" /></svg>
          </StatusIcon>
          <Slider><SliderThumb /></Slider>
        </StatusRight>
      </StatusBar>
    </Window>
  );
}
